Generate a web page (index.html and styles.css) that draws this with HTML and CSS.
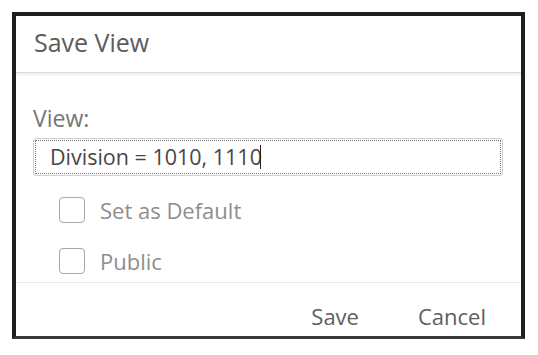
FILE: index.html
```html
<!DOCTYPE html>
<html lang="en">
<head>
    <meta charset="UTF-8">
    <meta name="viewport" content="width=device-width, initial-scale=1.0">
    <title>Save View</title>
    <link rel="stylesheet" href="styles.css">
</head>
<body>
    <div class="dialog">
        <div class="dialog-header">Save View</div>

        <div class="dialog-body">
            <label class="field-label" for="view-name">View:</label>
            <div class="field" id="view-name">Division = 1010, 1110<span class="caret"></span></div>

            <div class="options">
                <label class="option"><input type="checkbox"> Set as Default</label>
                <label class="option"><input type="checkbox"> Public</label>
            </div>
        </div>

        <div class="dialog-footer">
            <button type="button">Save</button>
            <button type="button">Cancel</button>
        </div>
    </div>
</body>
</html>
```

FILE: styles.css
```css
body {
    margin: 0;
    padding: 12px 0 0 12px;
    font-family: 'Open Sans', 'Noto Sans', sans-serif;
    background-color: #fff;
}
.dialog {
    width: 505px;
    border: 4px solid #1e1e1e;
    border-bottom: 3px solid #3a3a3a;
    background-color: #fff;
}
.dialog-header {
    height: 34px;
    padding: 9px 0 13px 18px;
    font-size: 25px;
    line-height: 34px;
    color: #5c5c5c;
    border-bottom: 1px solid #dcdcdc;
    box-shadow: 0 2px 3px rgba(0, 0, 0, 0.07);
}
.dialog-body {
    padding: 30px 18px 0 17px;
}
.field-label {
    display: block;
    font-size: 23px;
    line-height: 30px;
    color: #767676;
    margin-bottom: 5px;
}
.field {
    height: 36px;
    border: 1px solid #cfcfcf;
    border-radius: 3px;
    outline: 1px dotted #777;
    outline-offset: -3px;
    padding: 0 14px 0 16px;
    font-size: 21.5px;
    line-height: 36px;
    color: #474747;
    white-space: nowrap;
}
.caret {
    display: inline-block;
    width: 1px;
    height: 24px;
    margin-left: -2px;
    vertical-align: -4px;
    background-color: #222;
}
.options {
    display: flex;
    flex-direction: column;
    gap: 11px;
    margin-top: 14px;
    padding-left: 26px;
}
.option {
    display: flex;
    align-items: center;
    gap: 15px;
    height: 40px;
    font-size: 22px;
    color: #8e8e8e;
}
.option input {
    appearance: none;
    width: 26px;
    height: 26px;
    margin: 0;
    border: 1.5px solid #a8a8a8;
    border-radius: 4px;
    background-color: #fff;
}
.dialog-footer {
    display: flex;
    justify-content: flex-end;
    gap: 59px;
    height: 35px;
    padding: 18px 35px 0 0;
    border-top: 1px solid #e8e8e8;
    margin-top: 1px;
}
.dialog-footer button {
    border: none;
    background: none;
    padding: 0;
    font-family: inherit;
    font-size: 22px;
    line-height: 30px;
    height: 30px;
    color: #5e5e5e;
    cursor: pointer;
}
```
